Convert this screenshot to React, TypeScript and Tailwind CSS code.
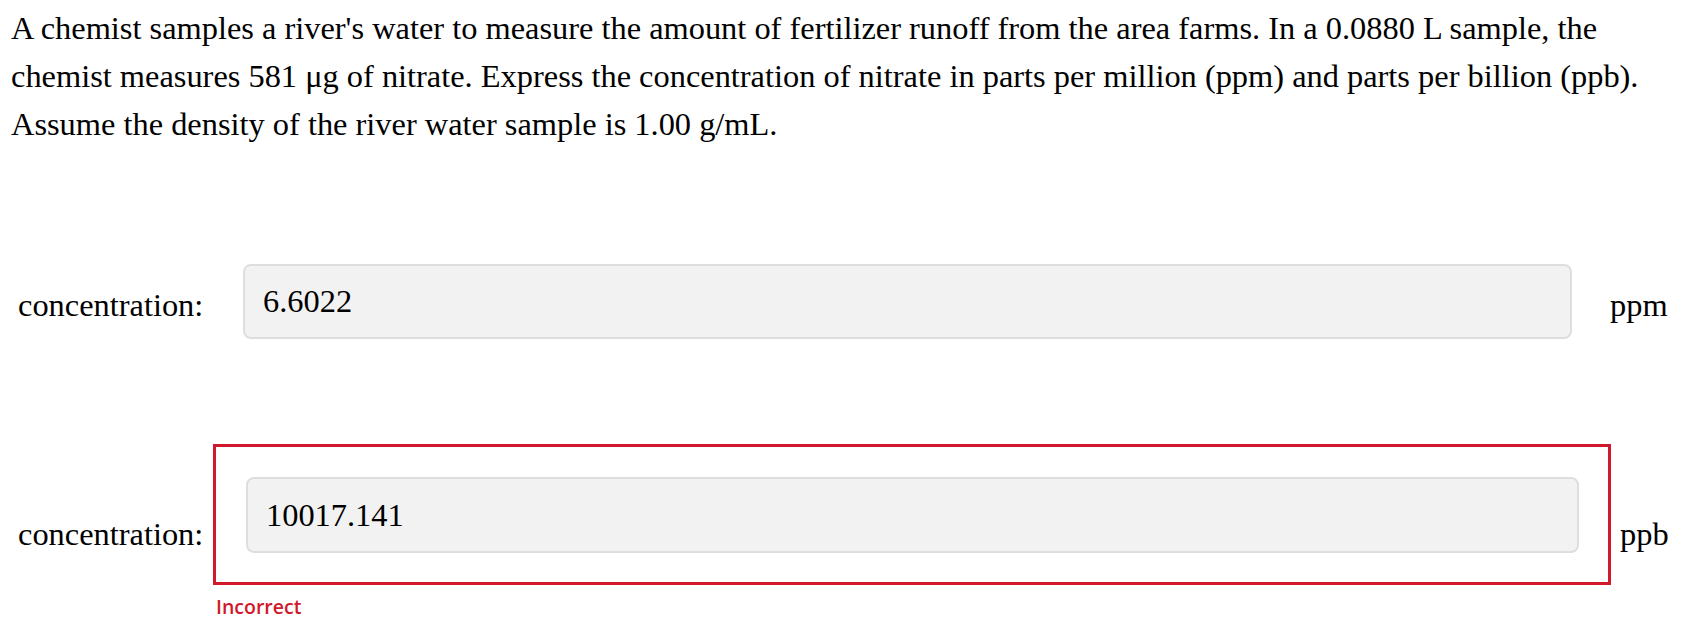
import React from "react";

const serif = "font-['Liberation_Serif','Times_New_Roman',serif]";

const App: React.FC = () => {
  return (
    <div className={`w-[1689px] h-[634px] bg-white text-black text-[32.4px] leading-[48px] ${serif}`}>
      <p className="pl-[11px] pt-[4px] pr-[8px]">
        A chemist samples a river's water to measure the amount of fertilizer runoff from the area farms. In a
        0.0880 L sample, the chemist measures 581 μg of nitrate. Express the concentration of nitrate in parts per
        million (ppm) and parts per billion (ppb). Assume the density of the river water sample is 1.00 g/mL.
      </p>

      {/* ppm answer */}
      <div className="mt-[116px] flex items-start h-[75px]">
        <span className="w-[243px] pl-[18px] mt-[17px]">concentration:</span>
        <input
          readOnly
          value="6.6022"
          className={`w-[1329px] h-[75px] rounded-[8px] border-2 border-[#dedede] bg-[#f2f2f2] px-[18px] text-[32.4px] text-black outline-none ${serif}`}
        />
        <span className="ml-[38px] mt-[17px]">ppm</span>
      </div>

      {/* ppb answer, marked incorrect */}
      <div className="mt-[105px] flex items-start">
        <span className="w-[213px] pl-[18px] mt-[66px]">concentration:</span>
        <div>
          <div className="w-[1398px] h-[141px] border-[3px] border-[#d0192b] pl-[30px] pt-[30px]">
            <input
              readOnly
              value="10017.141"
              className={`w-[1333px] h-[76px] rounded-[8px] border-2 border-[#dedede] bg-[#f2f2f2] px-[18px] text-[32.4px] text-black outline-none ${serif}`}
            />
          </div>
          <div className="mt-[8px] ml-[3px] text-[19.5px] leading-[27px] font-semibold font-['Open_Sans',sans-serif] text-[#d0192b]">
            Incorrect
          </div>
        </div>
        <span className="ml-[9px] mt-[66px]">ppb</span>
      </div>
    </div>
  );
};

export default App;
